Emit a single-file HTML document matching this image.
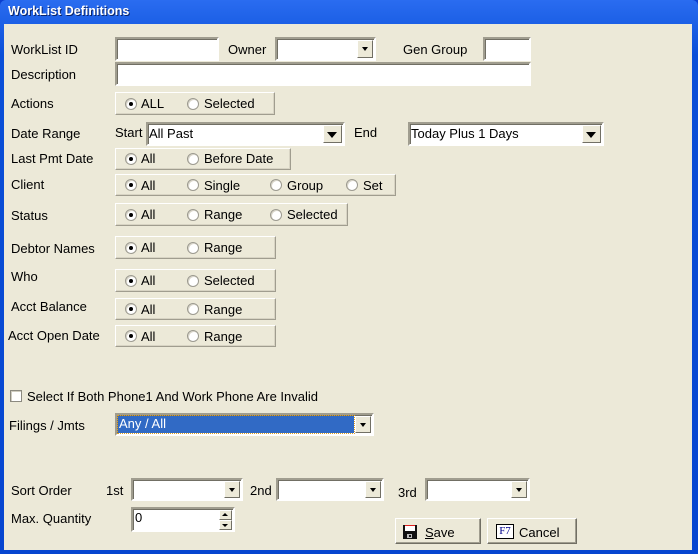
<!DOCTYPE html>
<html><head><meta charset="utf-8"><style>
*{box-sizing:border-box;margin:0;padding:0}
body{width:698px;height:554px;overflow:hidden;background:#0a3fd0;font-family:"Liberation Sans",sans-serif;font-size:13px;color:#000}
#win{position:absolute;left:0;top:0;width:698px;height:554px;background:linear-gradient(#2a6cf0,#0a4fd8 10%,#0645d0);border-radius:6px 6px 0 0}
#title{position:absolute;left:8px;top:4px;color:#fff;font-weight:bold;font-size:12.5px;text-shadow:1px 1px #0a246a}
#client{position:absolute;left:4px;top:24px;width:688px;height:526px;background:#ECE9D8}
.a{position:absolute;white-space:nowrap}
.l{position:absolute;white-space:nowrap;line-height:15px;margin-top:1px}
.in{position:absolute;background:#fff;border:2px solid;border-color:#a09d8f #fff #fff #a09d8f;box-shadow:inset 1px 1px #716f64;}
.grp{position:absolute;border:1px solid;border-color:#fff #a09d8f #a09d8f #fff;box-shadow:inset -1px -1px #d8d4c4}
.r{position:absolute;top:5px;width:12px;height:12px;border-radius:50%;background:#fff;border:1px solid #9c9a90;box-shadow:inset 1px 1px #d8d5c8}
.r.on::after{content:"";position:absolute;left:3px;top:3px;width:4px;height:4px;border-radius:50%;background:#000}
.rt{position:absolute;top:3px}
.btn{position:absolute;right:0;top:0;bottom:0;width:16px;background:#ECE9D8;border:1px solid;border-color:#fff #716f64 #716f64 #fff}
.btn::after{content:"";position:absolute;left:4px;top:6px;border:3px solid transparent;border-top:4px solid #000;border-bottom:0}
.big{width:19px}
.big::after{left:3px;top:6px;border-width:5px;border-top-width:6px}
.sp{position:absolute;right:1px;width:13px;background:#ECE9D8;border:1px solid;border-color:#fff #716f64 #716f64 #fff}
.sp.up::after{content:"";position:absolute;left:2px;top:2px;border:3px solid transparent;border-bottom:3px solid #000;border-top:0}
.sp.dn::after{content:"";position:absolute;left:2px;top:3px;border:3px solid transparent;border-top:3px solid #000;border-bottom:0}
.pb{position:absolute;background:#ECE9D8;border:1px solid;border-color:#fff #716f64 #716f64 #fff;box-shadow:inset -1px -1px #a09d8f}
</style></head><body>
<div id="win"><div id="title">WorkList Definitions</div>
<div id="client">
<div class="l" style="left:7px;top:17px">WorkList ID</div>
<div class="in" style="left:111px;top:13px;width:104px;height:24px"></div>
<div class="l" style="left:224px;top:17px">Owner</div>
<div class="in" style="left:271px;top:13px;width:101px;height:24px"><div class="btn" style="top:1px;bottom:1px;right:1px"></div></div>
<div class="l" style="left:399px;top:17px">Gen Group</div>
<div class="in" style="left:479px;top:13px;width:48px;height:24px"></div>
<div class="l" style="left:7px;top:42px">Description</div>
<div class="in" style="left:111px;top:38px;width:416px;height:24px"></div>

<div class="l" style="left:7px;top:71px">Actions</div>
<div class="grp" style="left:111px;top:68px;width:160px;height:23px"><div class="r on" style="left:9px"></div><div class="rt" style="left:25px">ALL</div><div class="r" style="left:71px"></div><div class="rt" style="left:88px">Selected</div></div>

<div class="l" style="left:7px;top:101px">Date Range</div>
<div class="l" style="left:111px;top:100px">Start</div>
<div class="in" style="left:142px;top:98px;width:199px;height:24px;padding-left:1px;padding-top:1px;line-height:18px;font-size:13px">All Past<div class="btn big" style="top:1px;bottom:1px;right:1px"></div></div>
<div class="l" style="left:350px;top:100px">End</div>
<div class="in" style="left:404px;top:98px;width:196px;height:24px;padding-left:1px;padding-top:1px;line-height:18px;font-size:13px">Today Plus 1 Days<div class="btn big" style="top:1px;bottom:1px;right:1px"></div></div>

<div class="l" style="left:7px;top:126px">Last Pmt Date</div>
<div class="grp" style="left:111px;top:124px;width:176px;height:22px"><div class="r on" style="left:9px;top:4px"></div><div class="rt" style="left:25px;top:2px">All</div><div class="r" style="left:71px;top:4px"></div><div class="rt" style="left:88px;top:2px">Before Date</div></div>

<div class="l" style="left:7px;top:152px">Client</div>
<div class="grp" style="left:111px;top:150px;width:281px;height:22px"><div class="r on" style="left:9px;top:4px"></div><div class="rt" style="left:25px;top:3px">All</div><div class="r" style="left:71px;top:4px"></div><div class="rt" style="left:88px;top:3px">Single</div><div class="r" style="left:154px;top:4px"></div><div class="rt" style="left:171px;top:3px">Group</div><div class="r" style="left:230px;top:4px"></div><div class="rt" style="left:247px;top:3px">Set</div></div>

<div class="l" style="left:7px;top:183px">Status</div>
<div class="grp" style="left:111px;top:179px;width:233px;height:23px"><div class="r on" style="left:9px"></div><div class="rt" style="left:25px">All</div><div class="r" style="left:71px"></div><div class="rt" style="left:88px">Range</div><div class="r" style="left:154px"></div><div class="rt" style="left:171px">Selected</div></div>

<div class="l" style="left:7px;top:216px">Debtor Names</div>
<div class="grp" style="left:111px;top:212px;width:161px;height:23px"><div class="r on" style="left:9px"></div><div class="rt" style="left:25px">All</div><div class="r" style="left:71px"></div><div class="rt" style="left:88px">Range</div></div>

<div class="l" style="left:7px;top:244px">Who</div>
<div class="grp" style="left:111px;top:245px;width:161px;height:23px"><div class="r on" style="left:9px"></div><div class="rt" style="left:25px">All</div><div class="r" style="left:71px"></div><div class="rt" style="left:88px">Selected</div></div>

<div class="l" style="left:7px;top:274px">Acct Balance</div>
<div class="grp" style="left:111px;top:274px;width:161px;height:22px"><div class="r on" style="left:9px;top:4px"></div><div class="rt" style="left:25px;top:3px">All</div><div class="r" style="left:71px;top:4px"></div><div class="rt" style="left:88px;top:3px">Range</div></div>

<div class="l" style="left:4px;top:303px">Acct Open Date</div>
<div class="grp" style="left:111px;top:301px;width:161px;height:22px"><div class="r on" style="left:9px;top:4px"></div><div class="rt" style="left:25px;top:3px">All</div><div class="r" style="left:71px;top:4px"></div><div class="rt" style="left:88px;top:3px">Range</div></div>

<div class="a" style="left:6px;top:366px;width:12px;height:12px;background:#fff;border:1px solid #8c8a80;box-shadow:inset 1px 1px #d0cdc0"></div>
<div class="l" style="left:23px;top:364px">Select If Both Phone1 And Work Phone Are Invalid</div>

<div class="l" style="left:5px;top:393px">Filings / Jmts</div>
<div class="in" style="left:111px;top:389px;width:259px;height:23px"><div class="a" style="left:1px;top:1px;right:18px;bottom:1px;background:#316ac5;color:#fff;padding-left:1px;line-height:16px;font-size:13px;outline:1px dotted #e0a020">Any / All</div><div class="btn" style="top:1px;bottom:1px;right:1px"></div></div>

<div class="l" style="left:7px;top:458px">Sort Order</div>
<div class="l" style="left:102px;top:458px">1st</div>
<div class="in" style="left:127px;top:454px;width:112px;height:23px"><div class="btn" style="top:1px;bottom:1px;right:1px"></div></div>
<div class="l" style="left:246px;top:458px">2nd</div>
<div class="in" style="left:272px;top:454px;width:108px;height:23px"><div class="btn" style="top:1px;bottom:1px;right:1px"></div></div>
<div class="l" style="left:394px;top:460px">3rd</div>
<div class="in" style="left:421px;top:454px;width:105px;height:23px"><div class="btn" style="top:1px;bottom:1px;right:1px"></div></div>

<div class="l" style="left:7px;top:486px">Max. Quantity</div>
<div class="in" style="left:127px;top:483px;width:104px;height:25px;padding-left:2px;line-height:18px">0
<div class="sp up" style="top:1px;height:10px"></div>
<div class="sp dn" style="top:11px;height:10px"></div></div>

<div class="pb" style="left:391px;top:494px;width:86px;height:26px">
<svg class="a" style="left:6px;top:5px" width="16" height="16" viewBox="0 0 16 16"><rect x="1" y="1" width="14" height="14" fill="#111"/><rect x="3" y="1" width="10" height="6" fill="#fff"/><rect x="3" y="1" width="10" height="1" fill="#e02020"/><rect x="5" y="10" width="5" height="4" fill="#bbb"/><rect x="7" y="11" width="2" height="2" fill="#111"/></svg>
<div class="a" style="left:29px;top:6px"><u>S</u>ave</div></div>
<div class="pb" style="left:483px;top:494px;width:90px;height:26px">
<div class="a" style="left:8px;top:5px;width:18px;height:15px;border:1px solid #000;background:#fff;color:#00008b;font-family:'Liberation Serif',serif;font-size:11px;line-height:13px;text-align:center">F7</div>
<div class="a" style="left:31px;top:6px">Cancel</div></div>
</div></div>
</body></html>
